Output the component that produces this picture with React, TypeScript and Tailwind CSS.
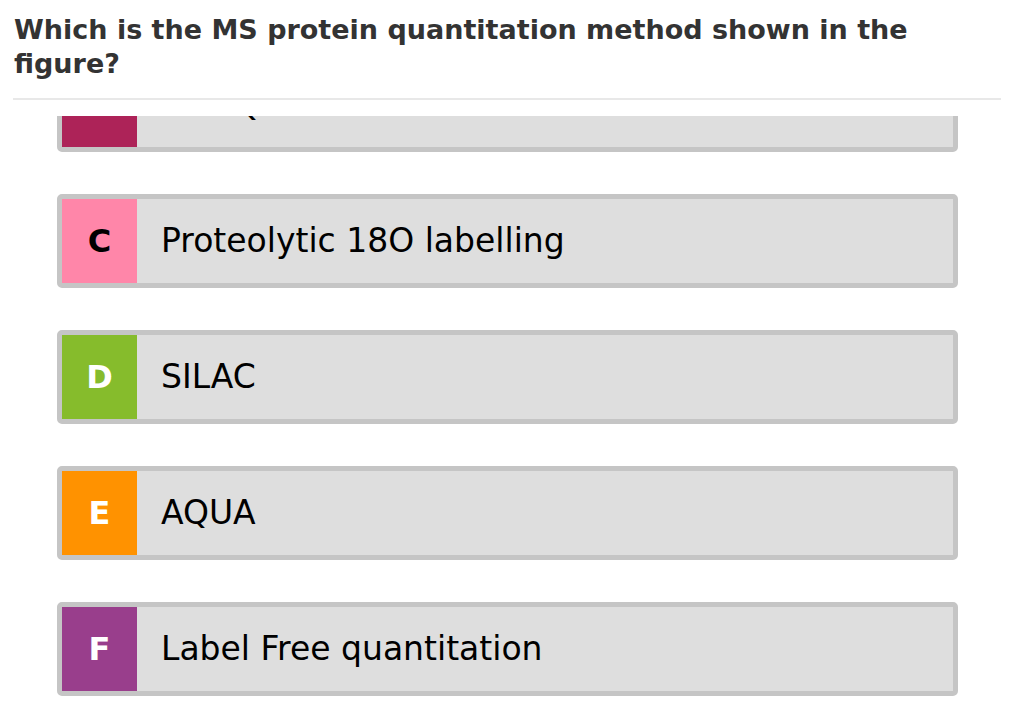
import React from 'react';

interface Choice {
  letter: string;
  text: string;
  swatch: string;
  ink: string;
}

const choices: Choice[] = [
  { letter: 'B', text: 'iTRAQ', swatch: 'bg-[#ad2358]', ink: 'text-white' },
  { letter: 'C', text: 'Proteolytic 18O labelling', swatch: 'bg-[#ff86a9]', ink: 'text-black' },
  { letter: 'D', text: 'SILAC', swatch: 'bg-[#86bc2c]', ink: 'text-white' },
  { letter: 'E', text: 'AQUA', swatch: 'bg-[#ff9200]', ink: 'text-white' },
  { letter: 'F', text: 'Label Free quantitation', swatch: 'bg-[#993e8c]', ink: 'text-white' },
];

const ChoiceRow: React.FC<{ choice: Choice }> = ({ choice }) => {
  return (
    <div className="flex h-[94px] w-[901px] rounded-[5px] border-[5px] border-[#c5c5c5] bg-[#dedede]">
      <div
        className={`flex w-[75px] shrink-0 items-center justify-center text-[32px] font-bold ${choice.swatch} ${choice.ink}`}
      >
        {choice.letter}
      </div>
      <div className="flex items-center pl-[24px] text-[33px] text-black">
        {choice.text}
      </div>
    </div>
  );
};

export default function App() {
  return (
    <div className="flex h-[723px] flex-col overflow-hidden bg-white font-['DejaVu_Sans',sans-serif]">
      <h1 className="px-[14px] pt-[13px] text-[27px] font-bold leading-[34px] text-[#333333]">
        Which is the MS protein quantitation method shown in the
        <br />
        figure?
      </h1>
      {/* divider under the question */}
      <div className="ml-[13px] mr-[23px] mt-[17px] h-[2px] bg-[#e8e8e8]" />
      <div className="mt-[16px] flex-1 overflow-hidden">
        <div className="-mt-[58px] flex flex-col gap-[42px] pl-[57px]">
          {choices.map((c) => (
            <ChoiceRow key={c.letter} choice={c} />
          ))}
        </div>
      </div>
    </div>
  );
}
